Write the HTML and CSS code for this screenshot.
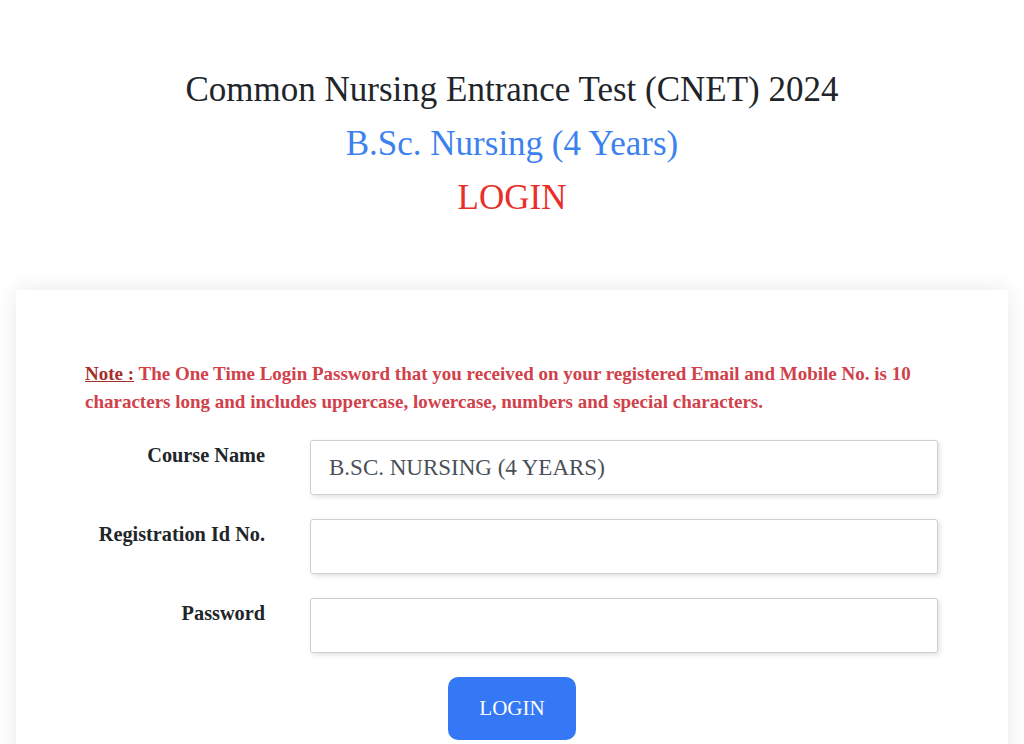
FILE: index.html
```html
<!DOCTYPE html>
<html lang="en">
<head>
<meta charset="utf-8">
<title>CNET 2024 Login</title>
<link rel="stylesheet" href="styles.css">
</head>
<body>
<header class="head">
  <h1 class="title">Common Nursing Entrance Test (CNET) 2024</h1>
  <h2 class="subtitle">B.Sc. Nursing (4 Years)</h2>
  <h2 class="login-title">LOGIN</h2>
</header>
<main class="card">
  <p class="note"><span class="note-label">Note :</span> The One Time Login Password that you received on your registered Email and Mobile No. is 10 characters long and includes uppercase, lowercase, numbers and special characters.</p>
  <form class="form">
    <label class="label">Course Name</label>
    <div class="field">B.SC. NURSING (4 YEARS)</div>
    <label class="label">Registration Id No.</label>
    <div class="field"></div>
    <label class="label">Password</label>
    <div class="field"></div>
    <div class="actions"><button type="button" class="btn">LOGIN</button></div>
  </form>
</main>
</body>
</html>
```
FILE: styles.css
```css
html, body {
  margin: 0;
  padding: 0;
  background: #ffffff;
  font-family: "Liberation Serif", "Times New Roman", serif;
}
.head {
  padding-top: 63px;
  text-align: center;
}
.title, .subtitle, .login-title {
  margin: 0;
  font-weight: normal;
  font-size: 35px;
  line-height: 54px;
}
.title { color: #212529; }
.subtitle { color: #3b82f0; }
.login-title { color: #e8302a; }
.card {
  margin: 65px 16px 0;
  padding: 70px 70px 40px 69px;
  background: #ffffff;
  box-shadow: 0 0 22px rgba(0, 0, 0, 0.09);
}
.note {
  margin: 0 0 24px;
  font-size: 19px;
  line-height: 28px;
  font-weight: bold;
  color: #d0414b;
}
.note-label {
  color: #a3302b;
  text-decoration: underline;
}
.form {
  display: grid;
  grid-template-columns: 180px 1fr;
  column-gap: 45px;
  row-gap: 24px;
}
.label {
  text-align: right;
  font-weight: bold;
  font-size: 20.3px;
  line-height: 30px;
  color: #212529;
}
.field {
  height: 55px;
  box-sizing: border-box;
  border: 1px solid #cfcfcf;
  border-radius: 3px;
  box-shadow: 2px 2px 5px rgba(0, 0, 0, 0.12);
  padding: 0 18px;
  font-size: 23px;
  line-height: 53px;
  color: #495057;
  background: #fff;
}
.actions {
  grid-column: 1 / -1;
  display: flex;
  justify-content: center;
  padding-left: 1px;
}
.btn {
  width: 128px;
  height: 63px;
  border: none;
  border-radius: 10px;
  background: #3578f5;
  color: #ffffff;
  font-family: "Liberation Serif", "Times New Roman", serif;
  font-size: 21px;
}
```
